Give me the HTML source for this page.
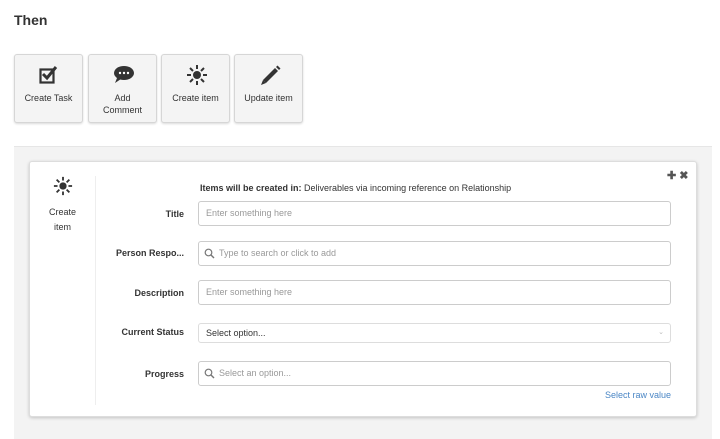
<!DOCTYPE html>
<html><head><style>
*{box-sizing:border-box}
body{margin:0;width:720px;height:439px;background:#fff;font-family:"Liberation Sans",sans-serif;color:#333;position:relative;overflow:hidden}
.abs{position:absolute}
h1{position:absolute;left:14px;top:12px;margin:0;font-size:14px;font-weight:bold;color:#333}
.btn{position:absolute;top:54px;width:69px;height:69px;background:#f4f4f4;border:1px solid #d6d6d6;border-radius:3px;box-shadow:0 1px 2px rgba(0,0,0,.15);text-align:center;font-size:9px;color:#333;line-height:12px}
.btn svg{position:absolute;left:24px;top:10px}
.btn span{position:absolute;left:0;right:0}
.panel{left:14px;top:146px;width:698px;height:293px;background:#f3f3f3;border-top:1px solid #e6e6e6}
.card{left:29px;top:161px;width:668px;height:256px;background:#fff;border:1px solid #ddd;border-radius:3px;box-shadow:0 1px 3px rgba(0,0,0,.2)}
.lbl{position:absolute;right:536px;font-size:9px;font-weight:bold;color:#333;text-align:right}
.inp{position:absolute;left:198px;width:473px;height:25px;border:1px solid #ccc;border-radius:3px;font-size:9px;color:#999;padding-left:7px;line-height:23px;background:#fff}
</style></head><body>
<h1>Then</h1>
<div class="btn" style="left:14px"><svg width="22" height="20" viewBox="0 0 22 20"><rect x="1.5" y="4.5" width="13" height="13" fill="none" stroke="#333" stroke-width="2.2"/><path d="M4 9l4 4 9-11" fill="none" stroke="#333" stroke-width="3"/></svg><span style="top:37px">Create Task</span></div>
<div class="btn" style="left:88px"><svg width="22" height="20" viewBox="0 0 22 20"><ellipse cx="11" cy="8" rx="10" ry="7" fill="#333"/><path d="M4 13l-2 5 6-4z" fill="#333"/><circle cx="7" cy="8" r="1.2" fill="#fff"/><circle cx="11" cy="8" r="1.2" fill="#fff"/><circle cx="15" cy="8" r="1.2" fill="#fff"/></svg><span style="top:37px">Add<br>Comment</span></div>
<div class="btn" style="left:161px"><svg width="22" height="20" viewBox="0 0 22 20"><circle cx="11" cy="10" r="4" fill="#333"/><g stroke="#333" stroke-width="2"><path d="M11 0v4M11 16v4M1 10h4M17 10h4M4 3l3 3M15 14l3 3M18 3l-3 3M4 17l3-3"/></g></svg><span style="top:37px">Create item</span></div>
<div class="btn" style="left:234px"><svg width="22" height="22" viewBox="0 0 22 22"><path d="M4 15L16 3l3 3L7 18z" fill="#333"/><path d="M4 15l-2 5 5-2z" fill="#333"/><path d="M17 2l1.5-1.5 3 3L20 5z" fill="#333"/></svg><span style="top:37px">Update item</span></div>
<div class="abs panel"></div>
<div class="abs card"></div>
<svg class="abs" style="left:53px;top:176px" width="20" height="20" viewBox="0 0 22 22"><circle cx="11" cy="11" r="4" fill="#333"/><g stroke="#333" stroke-width="2"><path d="M11 1v4M11 17v4M1 11h4M17 11h4M4 4l3 3M15 15l3 3M18 4l-3 3M4 18l3-3"/></g></svg>
<div class="abs" style="left:30px;width:65px;top:205px;text-align:center;font-size:9px;line-height:15px;color:#333">Create<br>item</div>
<div class="abs" style="left:95px;top:176px;width:1px;height:229px;background:#eee"></div>
<div class="abs" style="left:667px;top:169px;font-size:11px;font-weight:bold;color:#555">✚ ✖</div>
<div class="abs" style="left:200px;top:183px;font-size:9px;color:#333"><b>Items will be created in:</b> Deliverables via incoming reference on Relationship</div>
<div class="lbl" style="top:209px">Title</div>
<div class="inp" style="top:201px">Enter something here</div>
<div class="lbl" style="top:248px">Person Respo...</div>
<div class="inp" style="top:241px;padding-left:20px">Type to search or click to add</div>
<svg class="abs" style="left:204px;top:248px" width="11" height="11" viewBox="0 0 11 11"><circle cx="4.5" cy="4.5" r="3.3" fill="none" stroke="#777" stroke-width="1.2"/><path d="M7 7l3 3" stroke="#777" stroke-width="1.4"/></svg>
<div class="lbl" style="top:288px">Description</div>
<div class="inp" style="top:280px">Enter something here</div>
<div class="lbl" style="top:327px">Current Status</div>
<div class="inp" style="top:323px;height:20px;line-height:18px;border-color:#ddd;color:#333">Select option...<span style="position:absolute;right:6px;color:#bbb;font-size:7px">⌄</span></div>
<div class="lbl" style="top:369px">Progress</div>
<div class="inp" style="top:361px;padding-left:20px">Select an option...</div>
<svg class="abs" style="left:204px;top:368px" width="11" height="11" viewBox="0 0 11 11"><circle cx="4.5" cy="4.5" r="3.3" fill="none" stroke="#777" stroke-width="1.2"/><path d="M7 7l3 3" stroke="#777" stroke-width="1.4"/></svg>
<div class="abs" style="right:49px;top:390px;font-size:9px;color:#4a86c5">Select raw value</div>
</body></html>
